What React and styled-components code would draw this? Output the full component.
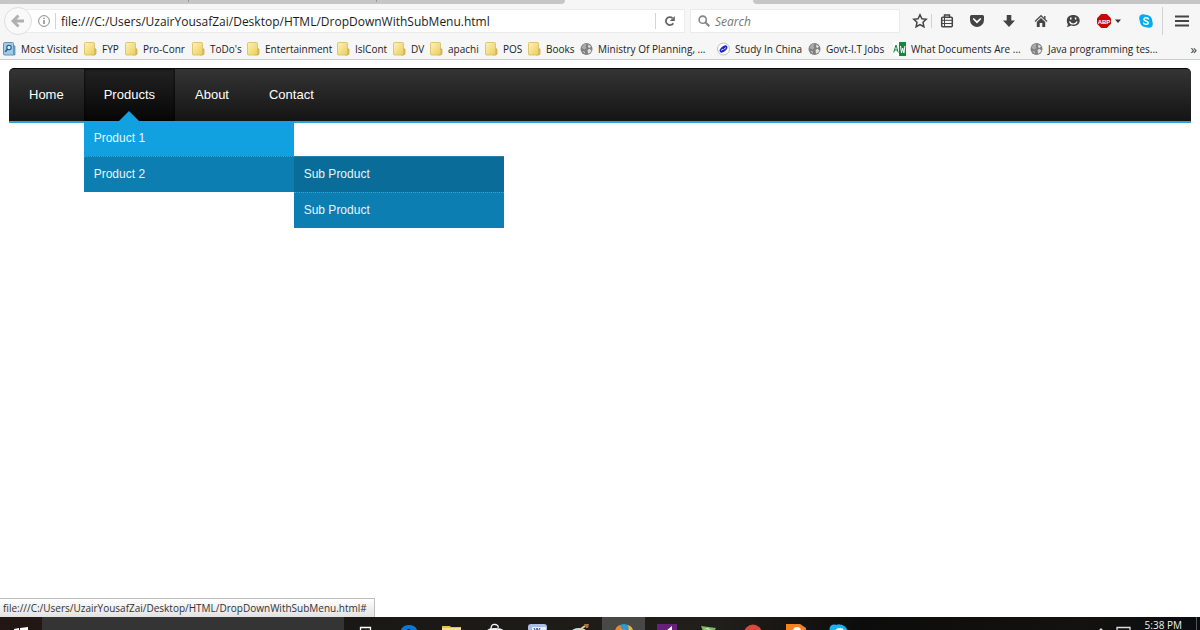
import React from 'react';
import styled, { createGlobalStyle } from 'styled-components';

const GlobalStyle = createGlobalStyle`
  * {
    box-sizing: border-box;
  }

  body {
    margin: 0;
    background: #fff;
    font-family: "Open Sans", "Noto Sans", sans-serif;
  }

  button {
    padding: 0;
    border: 0;
    background: none;
    font: inherit;
  }

  a {
    color: inherit;
    text-decoration: none;
  }

  svg {
    display: block;
    flex: none;
  }
`;

const Window = styled.div`
  display: flex;
  flex-direction: column;
  height: 100vh;
  overflow: hidden;
`;

/* tabs */

const TabStrip = styled.div`
  display: flex;
  height: 4px;
  background: #f6f6f6;
`;

const TabGroup = styled.div`
  display: flex;
  flex: ${(p) => p.$grow} 1 0;
  background: #c6c6c6;
  border-radius: ${(p) => (p.$side === 'left' ? '0 0 8px 0' : '0 0 0 8px')};
`;

const Tab = styled.div`
  flex: 1;
  height: 2px;

  & + & {
    border-left: 1px solid #999;
  }
`;

const ActiveTab = styled.div`
  flex: 188 1 0;
`;

/* toolbar */

const Toolbar = styled.div`
  display: flex;
  align-items: center;
  height: 34px;
  padding-left: 4px;
  background: #f6f6f6;
`;

const BackButton = styled.button`
  display: flex;
  align-items: center;
  justify-content: center;
  position: relative;
  z-index: 1;
  width: 28px;
  height: 28px;
  border: 1px solid #dedede;
  border-radius: 50%;
  background: #f9f9f9;
`;

const Field = styled.div`
  display: flex;
  align-items: center;
  height: 24px;
  background: #fff;
  border: 1px solid #ebebeb;
`;

const UrlField = styled(Field)`
  flex: 1;
  margin-left: -6px;
  padding-left: 11px;
`;

const SearchField = styled(Field)`
  width: 210px;
  margin: 0 8px 0 5px;
  padding-left: 7px;
  gap: 5px;
`;

const FieldDivider = styled.span`
  width: 1px;
  height: 16px;
  margin-left: 5px;
  background: #d4d4d4;
`;

const TextInput = styled.input`
  flex: 1;
  min-width: 0;
  padding: 0;
  border: 0;
  outline: 0;
  background: none;
  color: #1c1c1c;
  font-family: inherit;
  font-size: 12px;

  &::placeholder {
    color: #777;
    font-style: italic;
    opacity: 1;
  }
`;

const UrlInput = styled(TextInput)`
  margin-left: 5px;
`;

const ReloadButton = styled.button`
  display: flex;
  align-items: center;
  justify-content: center;
  width: 28px;
  height: 22px;
`;

const ToolButton = styled.button`
  display: flex;
  align-items: center;
  justify-content: center;
  width: ${(p) => p.$width || 32}px;
  height: 28px;
`;

const ToolDivider = styled.span`
  width: 1px;
  height: ${(p) => p.$height}px;
  background: #d2d2d2;
`;

/* bookmarks */

const Bookmarks = styled.nav`
  display: flex;
  align-items: center;
  gap: 6px;
  height: 22px;
  padding: 0 3px;
  background: #f6f6f6;
  border-bottom: 1px solid #cbcbcb;
  white-space: nowrap;
`;

const Bookmark = styled.a`
  display: flex;
  align-items: center;
  gap: 5px;
  width: ${(p) => p.$width}px;
  color: #222;
  font-size: 10px;
  line-height: 14px;
`;

const MoreButton = styled.button`
  margin-left: auto;
  color: #333;
  font-size: 13px;
  line-height: 14px;
`;

/* page */

const Page = styled.main`
  flex: 1;
  position: relative;
  padding: 8px 9px;
  font-family: "Liberation Sans", Arial, sans-serif;
`;

const MenuBar = styled.ul`
  display: flex;
  height: 55px;
  margin: 0;
  padding: 0;
  list-style: none;
  background: linear-gradient(#343434, #141414);
  border-top: 1px solid #0a0a0a;
  border-bottom: 2px solid #2ea0dc;
  border-radius: 5px 5px 0 0;
`;

const MenuItem = styled.li`
  position: relative;
  background: ${(p) => (p.$open ? 'linear-gradient(#222, #060606)' : 'none')};
  box-shadow: ${(p) => (p.$open ? 'inset 0 0 3px #000' : 'none')};
`;

const MenuLink = styled.a`
  display: block;
  padding: 0 20px;
  color: #fff;
  font-size: 13px;
  line-height: 52px;
`;

const Pointer = styled.span`
  position: absolute;
  bottom: 0;
  left: 50%;
  margin-left: -10px;
  border: 10px solid transparent;
  border-top: 0;
  border-bottom-color: #11a1e1;
`;

const DropDown = styled.ul`
  position: absolute;
  top: 100%;
  left: 0;
  width: 210px;
  margin: 0;
  padding: 0;
  list-style: none;
`;

const SubMenu = styled(DropDown)`
  top: -1px;
  left: 100%;
  border-top: 1px solid #2a7fa8;
`;

const colors = {
  light: '#11a1e1',
  blue: '#0c7eb2',
  dark: '#0a6c98',
};

const DropItem = styled.li`
  position: relative;
  background: ${(p) => colors[p.$tone]};

  & + & {
    border-top: 1px dotted #31a4db;
  }
`;

const DropLink = styled.a`
  display: block;
  padding: 0 10px;
  color: #e8f4fa;
  font-size: 12px;
  line-height: 35px;
`;

const Status = styled.div`
  position: absolute;
  bottom: 0;
  left: 0;
  height: 19px;
  padding: 0 7px 0 3px;
  border: 1px solid #bdbdbd;
  border-width: 1px 1px 0 0;
  background: linear-gradient(#fff, #e2e2e2);
  color: #333;
  font-family: "Open Sans", "Noto Sans", sans-serif;
  font-size: 10px;
  line-height: 18px;
`;

/* taskbar */

const Taskbar = styled.footer`
  display: flex;
  height: 13px;
  overflow: hidden;
  background: linear-gradient(90deg, #231715, #191814 30%, #211f1a 60%, #0c0c0c 72%, #14120f 90%, #080c12);
`;

const StartButton = styled.button`
  width: 42px;
  padding-left: 13px;
`;

const TaskSearch = styled.button`
  width: 302px;
  background: #343434;
`;

const TaskButton = styled.button`
  display: flex;
  justify-content: center;
  width: 43px;
  background: ${(p) => (p.$active ? '#484846' : 'none')};
`;

const Tray = styled.div`
  display: flex;
  gap: 14px;
  margin-left: auto;
  padding-right: 3px;
  color: #eee;
`;

const Clock = styled.time`
  padding-top: 4px;
  font-size: 10px;
  line-height: 9px;
`;

const ShowDesktop = styled.button`
  border-left: 1px solid #555;
`;

/* icons */

const MostVisitedIcon = () => (
  <svg width="13" height="14" viewBox="0 0 13 14">
    <path d="M9 3l3 1v9H9z" fill="#6ea6cc" stroke="#5189b2" strokeWidth=".7" />
    <rect x=".5" y=".5" width="10" height="12.5" rx="1" fill="#9fcae8" stroke="#5c96bf" />
    <circle cx="6" cy="5.5" r="2.2" fill="#d9effb" stroke="#26547e" strokeWidth="1.1" />
    <path d="M4.5 7.2L2.2 9.8" stroke="#26547e" strokeWidth="1.5" />
  </svg>
);

const FolderIcon = () => (
  <svg width="13" height="14" viewBox="0 0 13 14">
    <defs>
      <linearGradient id="folder" x2="1" y2="1">
        <stop offset="0" stopColor="#fff3ae" />
        <stop offset="1" stopColor="#e9cd60" />
      </linearGradient>
    </defs>
    <path d="M8 6l4 1v5l-1 1H8z" fill="#e1c35b" stroke="#c4a03d" strokeWidth=".7" />
    <path d="M.5 1.5q0-1 1-1h8q1 0 1 1v10l-1 1.5h-8q-1 0-1-1z" fill="url(#folder)" stroke="#d8bb58" strokeWidth=".8" />
  </svg>
);

const GlobeIcon = () => (
  <svg width="13" height="14" viewBox="0 0 13 14">
    <circle cx="6.5" cy="7" r="6" fill="#808080" />
    <path d="M1.500 6Q2 3 5 1.800L6.500 2.500 5.500 4.500 6.500 6 4.500 7.500z" fill="#ababab" />
    <path d="M8.500 2.500l2.500 2-1.500 1.500-1.500-1zM7.500 8l2-1.200 2 1.700-1.500 2.500-2 .5zM2.500 9l2 .5.500 2z" fill="#e2e2e2" />
  </svg>
);

const StudyIcon = () => (
  <svg width="13" height="14" viewBox="0 0 13 14">
    <circle cx="6.5" cy="7" r="6" fill="#fff" stroke="#b9bfc6" />
    <ellipse cx="6.5" cy="7" rx="4.600" ry="2.500" fill="#2525c9" transform="rotate(-40 6.500 7)" />
    <path d="M4 8.500l2-1.500M6.500 7.500l2.500-2" stroke="#d5d5ff" />
  </svg>
);

const AwIcon = () => (
  <svg width="13" height="14" viewBox="0 0 13 14">
    <rect width="6" height="14" fill="#fff" />
    <rect x="6" width="7" height="14" fill="#128a3c" />
    <path d="M.7 10.500L3 3l2.200 7.500M1.500 8h3" fill="none" stroke="#128a3c" />
    <path d="M7.500 4l1 7 1.200-5 1.200 5 1-7" fill="none" stroke="#fff" />
  </svg>
);

const BackIcon = () => (
  <svg width="14" height="14" viewBox="0 0 14 14">
    <path d="M7.500 1.500L2 7l5.500 5.500M2.500 7H13" fill="none" stroke="#b0b0b0" strokeWidth="3" />
  </svg>
);

const InfoIcon = () => (
  <svg width="12" height="12" viewBox="0 0 12 12">
    <circle cx="6" cy="6" r="5.400" fill="none" stroke="#8a8a8a" />
    <path d="M6 5v4M6 2.700v1.300" stroke="#777" strokeWidth="1.300" />
  </svg>
);

const ReloadIcon = () => (
  <svg width="12" height="12" viewBox="0 0 12 12">
    <path d="M9.300 8.200A4 4 0 1 1 8.500 3" fill="none" stroke="#666" strokeWidth="1.800" />
    <path d="M10.800 1v5H5.800z" fill="#666" />
  </svg>
);

const SearchIcon = () => (
  <svg width="12" height="12" viewBox="0 0 12 12">
    <circle cx="4.700" cy="4.700" r="3.600" fill="none" stroke="#858585" strokeWidth="1.600" />
    <path d="M7.300 7.300l4 4" stroke="#858585" strokeWidth="2" />
  </svg>
);

const StarIcon = () => (
  <svg width="16" height="16" viewBox="0 0 16 16">
    <path d="M8 1.800l1.900 4 4.300.5-3.200 3 .9 4.400L8 11.500l-3.900 2.200.9-4.400-3.200-3 4.300-.5z" fill="none" stroke="#444" strokeWidth="1.500" />
  </svg>
);

const ListIcon = () => (
  <svg width="14" height="14" viewBox="0 0 14 14">
    <path d="M4.500 3V1h5v2" fill="none" stroke="#444" strokeWidth="1.400" />
    <rect x="1.700" y="3.200" width="10.600" height="9.600" rx="1" fill="none" stroke="#444" strokeWidth="1.500" />
    <path d="M1 6.300h12M1 9.500h12M4.500 3v10" stroke="#444" />
  </svg>
);

const PocketIcon = () => (
  <svg width="14" height="14" viewBox="0 0 14 14">
    <path d="M0 2.500Q0 1 1.500 1h11Q14 1 14 2.500V6q0 3.200-2.200 5T7 13q-2.600 0-4.800-2T0 6z" fill="#444" />
    <path d="M3.700 5L7 8.200 10.300 5" fill="none" stroke="#fff" strokeWidth="1.700" strokeLinecap="round" />
  </svg>
);

const DownloadIcon = () => (
  <svg width="14" height="14" viewBox="0 0 14 14">
    <path d="M4.700 1h4.600v5.500H13L7 13 1 6.500h3.700z" fill="#444" />
  </svg>
);

const HomeIcon = () => (
  <svg width="14" height="14" viewBox="0 0 14 14">
    <path d="M1 7.500L7 1.700l6 5.800M10.800 2v3" fill="none" stroke="#555" strokeWidth="1.500" />
    <path d="M2.800 8L7 4l4.200 4v5H8.300V9H5.700v4H2.800z" fill="#444" />
  </svg>
);

const ChatIcon = () => (
  <svg width="14" height="14" viewBox="0 0 14 14">
    <path d="M7.300 1C11 1 13.700 3.200 13.700 6.500S11 12 7.300 12q-1.300 0-2.300-.4Q3.300 13 .5 13q1.500-1.300 1.300-2.800Q.8 8.500.8 6.500C.8 3.200 3.500 1 7.300 1z" fill="#444" />
    <path d="M4.800 3.500v2M9.600 3.500v2" stroke="#fff" strokeWidth="1.500" />
    <path d="M3.500 7.500q1 2.500 3.800 2.500t3.800-2.500" fill="none" stroke="#fff" strokeWidth="1.200" />
  </svg>
);

const AbpIcon = () => (
  <svg width="25" height="14" viewBox="0 0 25 14">
    <path d="M4.200 0h5.600L14 4.200v5.600L9.800 14H4.200L0 9.800V4.200z" fill="#cb0606" />
    <text x="7" y="9.500" textAnchor="middle" fontFamily="Liberation Sans, Arial, sans-serif" fontSize="6" fontWeight="700" fill="#fff">ABP</text>
    <path d="M18 5.500h6l-3 3.500z" fill="#333" />
  </svg>
);

const SkypeIcon = () => (
  <svg width="14" height="14" viewBox="0 0 14 14">
    <circle cx="4.200" cy="4.200" r="4" fill="#00aff0" />
    <circle cx="9.800" cy="9.800" r="4" fill="#00aff0" />
    <circle cx="7" cy="7" r="6.200" fill="#00aff0" />
    <path d="M9.300 4.800Q8.800 3.800 7 3.800T4.900 5.300Q4.900 6.500 7 7t2.200 1.700Q9.200 10.300 7 10.300T4.600 9" fill="none" stroke="#fff" strokeWidth="1.500" strokeLinecap="round" />
  </svg>
);

const MenuIcon = () => (
  <svg width="14" height="12" viewBox="0 0 14 12">
    <path d="M0 1.500h14M0 6h14M0 10.500h14" stroke="#444" strokeWidth="2.200" />
  </svg>
);

const taskIcons = {
  'Task View': <path d="M5.500 14v-3.500h10V14" fill="none" stroke="#fff" strokeWidth="1.300" />,
  Edge: <path d="M2 15Q4 8 11 8t9 7H14Q13 11.500 10 12L5 15z" fill="#0a78d6" />,
  'File Explorer': (
    <>
      <path d="M1 9h8l1 1h10v4H1z" fill="#e9bd48" />
      <path d="M1 11h19v3H1z" fill="#fbe08c" />
    </>
  ),
  Store: (
    <>
      <path d="M3 14q0-3 8-3t9 3z" fill="#f4f4f4" />
      <path d="M7 12q0-5 4-4.500T14 11" fill="none" stroke="#fff" strokeWidth="1.300" />
    </>
  ),
  Word: (
    <>
      <rect x="1" y="7" width="19" height="9" rx="3" fill="#a9bde6" />
      <rect x="5" y="10" width="14" height="5" fill="#e8eefb" />
      <path d="M7 11l1.500 3 1.500-3 1.500 3 1.500-3" fill="none" stroke="#2f569f" />
    </>
  ),
  Paint: (
    <>
      <ellipse cx="9" cy="15" rx="8" ry="4" fill="#bddcec" />
      <path d="M8 14l7-5" stroke="#ead08b" strokeWidth="2" />
      <path d="M14 7h5l-1 4h-2z" fill="#ad7447" />
    </>
  ),
  Firefox: (
    <>
      <circle cx="11" cy="16" r="9" fill="#2b9bd0" />
      <path d="M2 14q1-5 5-6l1 3 4 3z" fill="#ed8a25" />
      <path d="M15 8q5 2 5 6h-4z" fill="#f4b43c" />
    </>
  ),
  'Visual Studio': (
    <>
      <path d="M1 7h20v7H1z" fill="#68217a" />
      <path d="M10 14l6-5v5z" fill="#fff" />
    </>
  ),
  Notepad: (
    <>
      <path d="M2 9l15 2-2 3H4z" fill="#79bd5c" />
      <path d="M5 12l4-1 3 2z" fill="#dcebd3" />
    </>
  ),
  Recorder: <circle cx="11" cy="16.500" r="9" fill="#d94a3e" />,
  XAMPP: (
    <>
      <path d="M1 7h14l6 4v3H1z" fill="#f58220" />
      <circle cx="12" cy="14" r="4" fill="#fff" />
    </>
  ),
  Skype: (
    <>
      <circle cx="6" cy="12" r="4.500" fill="#12b5f0" />
      <circle cx="11" cy="16" r="8.800" fill="#12b5f0" />
      <path d="M7 14q1-3 5-3t4 3" fill="#fff" />
    </>
  ),
};

const bookmarks = [
  { name: 'Most Visited', icon: MostVisitedIcon, width: 75 },
  { name: 'FYP', icon: FolderIcon, width: 35 },
  { name: 'Pro-Conr', icon: FolderIcon, width: 61 },
  { name: "ToDo's", icon: FolderIcon, width: 49 },
  { name: 'Entertainment', icon: FolderIcon, width: 84 },
  { name: 'IslCont', icon: FolderIcon, width: 50 },
  { name: 'DV', icon: FolderIcon, width: 31 },
  { name: 'apachi', icon: FolderIcon, width: 49 },
  { name: 'POS', icon: FolderIcon, width: 37 },
  { name: 'Books', icon: FolderIcon, width: 46 },
  { name: 'Ministry Of Planning, ...', icon: GlobeIcon, width: 131 },
  { name: 'Study In China', icon: StudyIcon, width: 85 },
  { name: 'Govt-I.T Jobs', icon: GlobeIcon, width: 79 },
  { name: 'What Documents Are ...', icon: AwIcon, width: 131 },
  { name: 'Java programming tes...', icon: GlobeIcon, width: 131 },
];

const tools = [
  { name: 'Library', icon: ListIcon, width: 29 },
  { name: 'Pocket', icon: PocketIcon },
  { name: 'Downloads', icon: DownloadIcon },
  { name: 'Home', icon: HomeIcon },
  { name: 'Chat', icon: ChatIcon },
  { name: 'Adblock Plus', icon: AbpIcon, width: 41 },
  { name: 'Skype', icon: SkypeIcon },
];

const url = 'file:///C:/Users/UzairYousafZai/Desktop/HTML/DropDownWithSubMenu.html';

const App = () => {
  return (
    <Window>
      <GlobalStyle />
      <TabStrip>
        <TabGroup $grow={565} $side="left">
          <Tab />
          <Tab />
          <Tab />
        </TabGroup>
        <ActiveTab />
        <TabGroup $grow={447} $side="right" />
      </TabStrip>

      <Toolbar>
        <BackButton aria-label="Back"><BackIcon /></BackButton>
        <UrlField>
          <InfoIcon />
          <FieldDivider />
          <UrlInput aria-label="Address" defaultValue={url} />
          <FieldDivider />
          <ReloadButton aria-label="Reload"><ReloadIcon /></ReloadButton>
        </UrlField>
        <SearchField>
          <SearchIcon />
          <TextInput aria-label="Search" placeholder="Search" />
        </SearchField>
        <ToolButton aria-label="Bookmark this page" $width={23}><StarIcon /></ToolButton>
        <ToolDivider $height={14} />
        {tools.map(({ name, icon: Icon, width }) => (
          <ToolButton key={name} aria-label={name} $width={width}><Icon /></ToolButton>
        ))}
        <ToolDivider $height={28} />
        <ToolButton aria-label="Menu" $width={37}><MenuIcon /></ToolButton>
      </Toolbar>

      <Bookmarks>
        {bookmarks.map(({ name, icon: Icon, width }) => (
          <Bookmark key={name} href="#" $width={width}>
            <Icon />
            {name}
          </Bookmark>
        ))}
        <MoreButton aria-label="More bookmarks">»</MoreButton>
      </Bookmarks>

      <Page>
        <MenuBar>
          <MenuItem><MenuLink href="#">Home</MenuLink></MenuItem>
          <MenuItem $open>
            <MenuLink href="#">Products</MenuLink>
            <Pointer />
            <DropDown>
              <DropItem $tone="light"><DropLink href="#">Product 1</DropLink></DropItem>
              <DropItem $tone="blue">
                <DropLink href="#">Product 2</DropLink>
                <SubMenu>
                  <DropItem $tone="dark"><DropLink href="#">Sub Product</DropLink></DropItem>
                  <DropItem $tone="blue"><DropLink href="#">Sub Product</DropLink></DropItem>
                </SubMenu>
              </DropItem>
            </DropDown>
          </MenuItem>
          <MenuItem><MenuLink href="#">About</MenuLink></MenuItem>
          <MenuItem><MenuLink href="#">Contact</MenuLink></MenuItem>
        </MenuBar>
        <Status>{url}#</Status>
      </Page>

      <Taskbar>
        <StartButton aria-label="Start">
          <svg width="16" height="13" viewBox="0 0 16 13">
            <path d="M1 12l5-1v3H1zM7 11l8-1v4H7z" fill="#fff" />
          </svg>
        </StartButton>
        <TaskSearch aria-label="Search Windows" />
        {Object.entries(taskIcons).map(([name, drawing]) => (
          <TaskButton key={name} aria-label={name} $active={name === 'Firefox'}>
            <svg width="22" height="13" viewBox="0 0 22 13">{drawing}</svg>
          </TaskButton>
        ))}
        <Tray>
          <svg width="32" height="13" viewBox="0 0 32 13">
            <path d="M0 14l2-2 2 2M18 14v-3.500h13V14" fill="none" stroke="#ddd" strokeWidth="1.300" />
          </svg>
          <Clock>5:38 PM</Clock>
          <ShowDesktop aria-label="Show desktop" />
        </Tray>
      </Taskbar>
    </Window>
  );
}

export default App;
